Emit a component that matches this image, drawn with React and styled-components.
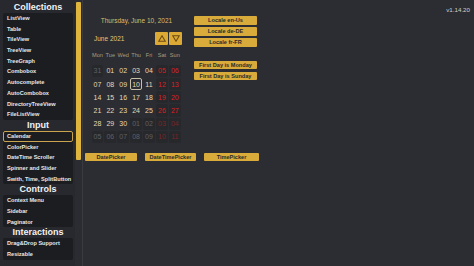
import React from 'react';
import styled, { createGlobalStyle } from 'styled-components';

const Global = createGlobalStyle`
  html, body {
    margin: 0;
    padding: 0;
    background: #2b2c31;
    font-family: "Liberation Sans", Arial, sans-serif;
  }
`;

const Root = styled.div`
  width: 474px;
  height: 266px;
  display: flex;
  overflow: hidden;
  background: #2b2c31;
`;

const Sidebar = styled.div`
  width: 70px;
  padding: 2px 2px 0 3px;
  display: flex;
  flex-direction: column;
  overflow: hidden;
  background: #28292e;
`;

const SectionTitle = styled.div`
  height: 11px;
  line-height: 11px;
  text-align: center;
  color: #f2f2f2;
  font-weight: bold;
  font-size: 9px;
  flex-shrink: 0;
`;

const List = styled.div`
  background: #1c1d21;
  border-radius: 2px;
  display: flex;
  flex-direction: column;
  flex-shrink: 0;
`;

const Item = styled.div`
  height: 10.7px;
  padding-left: 3px;
  font-size: 5.6px;
  font-weight: bold;
  color: #e8e8e8;
  white-space: nowrap;
  overflow: hidden;
  border-radius: 2px;
  box-sizing: border-box;
  border: ${p => (p.$active ? '1px solid #c9a44c' : '1px solid transparent')};
  line-height: 8.7px;
`;

const ScrollTrack = styled.div`
  width: 5px;
  padding: 2px 1px 0 1px;
  display: flex;
  flex-direction: column;
  border-right: 1px solid #3a3b41;
`;

const ScrollThumb = styled.div`
  height: 158px;
  background: #e0b53e;
  border-radius: 1px;
`;

const Main = styled.div`
  flex: 1;
  display: flex;
  flex-direction: column;
  padding: 14px 0 0 2px;
  background: #2c2d32;
`;

const TopRow = styled.div`
  display: flex;
  align-items: flex-start;
`;

const Calendar = styled.div`
  width: 91px;
  margin-left: 6px;
  display: flex;
  flex-direction: column;
`;

const DateTitle = styled.div`
  text-align: center;
  color: #d9bb6a;
  font-size: 6.5px;
  height: 14px;
  line-height: 14px;
`;

const NavRow = styled.div`
  display: flex;
  align-items: center;
  margin-top: 3px;
  height: 14px;
  padding-left: 3px;
`;

const MonthLabel = styled.div`
  flex: 1;
  color: #e2c676;
  font-size: 6.5px;
`;

const NavButton = styled.button`
  width: 13px;
  height: 13px;
  margin-left: 1px;
  padding: 0;
  border: none;
  border-radius: 1px;
  background: #dca935;
  display: flex;
  align-items: center;
  justify-content: center;
`;

const Grid = styled.div`
  display: grid;
  grid-template-columns: repeat(7, 12.9px);
  grid-template-rows: 15.4px;
  grid-auto-rows: 13.2px;
  margin-top: 4px;
`;

const WeekDay = styled.div`
  font-size: 5.6px;
  color: #a99d7f;
  display: flex;
  align-items: center;
  justify-content: center;
  box-sizing: border-box;
  padding-bottom: 3.4px;
`;

const Day = styled.div`
  font-size: 7px;
  display: flex;
  align-items: center;
  justify-content: center;
  margin: 0.5px;
  border-radius: 2px;
  box-sizing: border-box;
  color: ${p => p.$color};
  background: ${p => (p.$dark ? '#27282c' : 'transparent')};
  border: ${p => (p.$today ? '1px solid #c8c0aa' : '1px solid transparent')};
`;

const LocaleColumn = styled.div`
  display: flex;
  flex-direction: column;
  gap: 2.5px;
  margin-left: 12px;
  margin-top: 2px;
`;

const Spacer = styled.div`
  height: 9px;
`;

const GoldButton = styled.button`
  width: ${p => p.$w || 63}px;
  height: 8.5px;
  padding: 0;
  border: none;
  border-radius: 1px;
  background: #d8ab3a;
  color: #2a2a2a;
  font-family: "Liberation Sans", Arial, sans-serif;
  font-size: 5.6px;
  font-weight: bold;
  line-height: 8.5px;
  text-align: center;
`;

const Version = styled.div`
  margin-left: auto;
  margin-right: 4px;
  margin-top: -8px;
  color: #cfcfcf;
  font-size: 6.2px;
`;

const BottomRow = styled.div`
  display: flex;
  gap: 8px;
  margin-top: 9px;
`;

const collections = ['ListView', 'Table', 'TileView', 'TreeView', 'TreeGraph', 'Combobox', 'Autocomplete', 'AutoCombobox', 'DirectoryTreeView', 'FileListView'];
const inputs = ['Calendar', 'ColorPicker', 'DateTime Scroller', 'Spinner and Slider', 'Swith, Time, SplitButton'];
const controls = ['Context Menu', 'Sidebar', 'Paginator'];
const interactions = ['Drag&Drop Support', 'Resizable'];

const weekDays = ['Mon', 'Tue', 'Wed', 'Thu', 'Fri', 'Sat', 'Sun'];

const buildDays = () => {
  const days = [];
  days.push({ n: 31, other: true });
  for (let d = 1; d <= 30; d++) days.push({ n: d });
  for (let d = 1; d <= 11; d++) days.push({ n: d, other: true });
  return days.map((d, i) => ({ ...d, weekend: i % 7 >= 5 }));
};

const dayColor = d => {
  if (d.weekend) return d.other ? '#7a2426' : '#dc1f22';
  if (d.other) return '#5f6065';
  return '#e6d9b4';
};

const Triangle = ({ up }) => (
  <svg width="8" height="7" viewBox="0 0 8 7">
    <polygon
      points={up ? '4,0.8 7.3,6.3 0.7,6.3' : '0.7,0.7 7.3,0.7 4,6.2'}
      fill="none"
      stroke="#6b4a10"
      strokeWidth="1.1"
    />
  </svg>
);

const Section = ({ title, items, active }) => (
  <>
    <SectionTitle>{title}</SectionTitle>
    <List>
      {items.map(it => (
        <Item key={it} $active={it === active}>{it}</Item>
      ))}
    </List>
  </>
);

export default function App() {
  const days = buildDays();
  return (
    <Root>
      <Global />
      <Sidebar>
        <Section title="Collections" items={collections} />
        <Section title="Input" items={inputs} active="Calendar" />
        <Section title="Controls" items={controls} />
        <Section title="Interactions" items={interactions} />
      </Sidebar>
      <ScrollTrack>
        <ScrollThumb />
      </ScrollTrack>
      <Main>
        <TopRow>
          <Calendar>
            <DateTitle>Thursday, June 10, 2021</DateTitle>
            <NavRow>
              <MonthLabel>June 2021</MonthLabel>
              <NavButton><Triangle up /></NavButton>
              <NavButton><Triangle /></NavButton>
            </NavRow>
            <Grid>
              {weekDays.map(w => <WeekDay key={w}>{w}</WeekDay>)}
              {days.map((d, i) => (
                <Day
                  key={i}
                  $color={dayColor(d)}
                  $dark={d.weekend || d.other}
                  $today={!d.other && d.n === 10}
                >
                  {String(d.n).padStart(2, '0')}
                </Day>
              ))}
            </Grid>
          </Calendar>
          <LocaleColumn>
            <GoldButton>Locale en-Us</GoldButton>
            <GoldButton>Locale de-DE</GoldButton>
            <GoldButton>Locale fr-FR</GoldButton>
            <Spacer />
            <GoldButton>First Day is Monday</GoldButton>
            <GoldButton>First Day is Sunday</GoldButton>
          </LocaleColumn>
          <Version>v1.14.20</Version>
        </TopRow>
        <BottomRow>
          <GoldButton $w={52}>DatePicker</GoldButton>
          <GoldButton $w={51}>DateTimePicker</GoldButton>
          <GoldButton $w={55}>TimePicker</GoldButton>
        </BottomRow>
      </Main>
    </Root>
  );
}
